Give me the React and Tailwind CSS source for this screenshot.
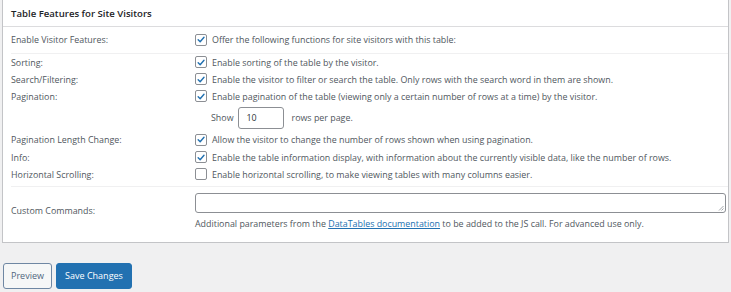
import React from "react";

const Check = ({ checked = true }) => (
  <span className="relative inline-flex h-[12px] w-[12px] shrink-0 items-center justify-center rounded-[2px] border border-[#8c8f94] bg-white">
    {checked && (
      <svg viewBox="0 0 12 12" className="h-[11px] w-[11px]" fill="none">
        <path d="M2.6 6.2 L5 8.6 L9.6 3.2" stroke="#2271b1" strokeWidth="1.7" strokeLinecap="round" strokeLinejoin="round" />
      </svg>
    )}
  </span>
);

const Row = ({ label, children, h = "h-[17px]" }) => (
  <div className={`flex items-center ${h}`}>
    <div className="w-[184px] shrink-0">{label}</div>
    <div className="flex items-center gap-[5px]">{children}</div>
  </div>
);

export default function App() {
  return (
    <div
      className="h-[292px] w-[731px] bg-[#f0f0f1] text-[8.9px] text-[#50575e]"
      style={{ fontFamily: '"Open Sans", "Noto Sans", sans-serif' }}
    >
      <div className="mx-[2px] border-x border-b border-[#c3c4c7] bg-white">
        <div className="flex h-[27px] items-center border-b border-[#dcdcde] pt-[2px] pl-[8px] text-[9.6px] font-semibold text-[#1d2327]">
          Table Features for Site Visitors
        </div>
        <div className="pl-[8px]">
          <div className="border-b border-[#f0f0f1]">
            <Row label="Enable Visitor Features:" h="h-[26px]">
              <Check />
              <span>Offer the following functions for site visitors with this table:</span>
            </Row>
          </div>
          <div className="border-b border-[#f0f0f1] pb-[3px]">
            <Row label="Sorting:">
              <Check />
              <span>Enable sorting of the table by the visitor.</span>
            </Row>
            <Row label="Search/Filtering:">
              <Check />
              <span>Enable the visitor to filter or search the table. Only rows with the search word in them are shown.</span>
            </Row>
            <Row label="Pagination:">
              <Check />
              <span>Enable pagination of the table (viewing only a certain number of rows at a time) by the visitor.</span>
            </Row>
            <div className="flex h-[26px] items-center pl-[200px]">
              <span>Show</span>
              <span className="ml-[4px] flex h-[22px] w-[46px] items-center rounded-[3px] border border-[#8c8f94] pl-[8px] text-[#2c3338]">10</span>
              <span className="ml-[8px]">rows per page.</span>
            </div>
            <Row label="Pagination Length Change:" h="h-[18px]">
              <Check />
              <span>Allow the visitor to change the number of rows shown when using pagination.</span>
            </Row>
            <Row label="Info:">
              <Check />
              <span>Enable the table information display, with information about the currently visible data, like the number of rows.</span>
            </Row>
            <Row label="Horizontal Scrolling:">
              <Check checked={false} />
              <span>Enable horizontal scrolling, to make viewing tables with many columns easier.</span>
            </Row>
          </div>
          <div className="flex pt-[6px] pb-[12px]">
            <div className="w-[184px] shrink-0 pt-[12px] leading-[12px]">Custom Commands:</div>
            <div className="flex flex-1 flex-col pr-[2px]">
              <div className="relative h-[20px] rounded-[3px] border border-[#8c8f94] bg-white">
                <svg className="absolute right-[1px] bottom-[1px] h-[6px] w-[6px]" viewBox="0 0 6 6">
                  <path d="M5.5 1 L1 5.5 M5.5 3.5 L3.5 5.5" stroke="#8c8f94" strokeWidth="0.8" />
                </svg>
              </div>
              <div className="mt-[5px] leading-[12px]">
                Additional parameters from the{" "}
                <span className="text-[#2271b1] underline">DataTables documentation</span> to be added to the JS call. For advanced use only.
              </div>
            </div>
          </div>
        </div>
      </div>
      <div className="mt-[20px] flex gap-[4px] pl-[3px]">
        <button className="h-[26px] w-[49px] rounded-[3px] border border-[#6f87a3] bg-[#f6f7f7] text-[9px] text-[#4f6680]">
          Preview
        </button>
        <button className="h-[26px] w-[76px] rounded-[3px] border border-[#2271b1] bg-[#2271b1] text-[9px] text-white">
          Save Changes
        </button>
      </div>
    </div>
  );
}
